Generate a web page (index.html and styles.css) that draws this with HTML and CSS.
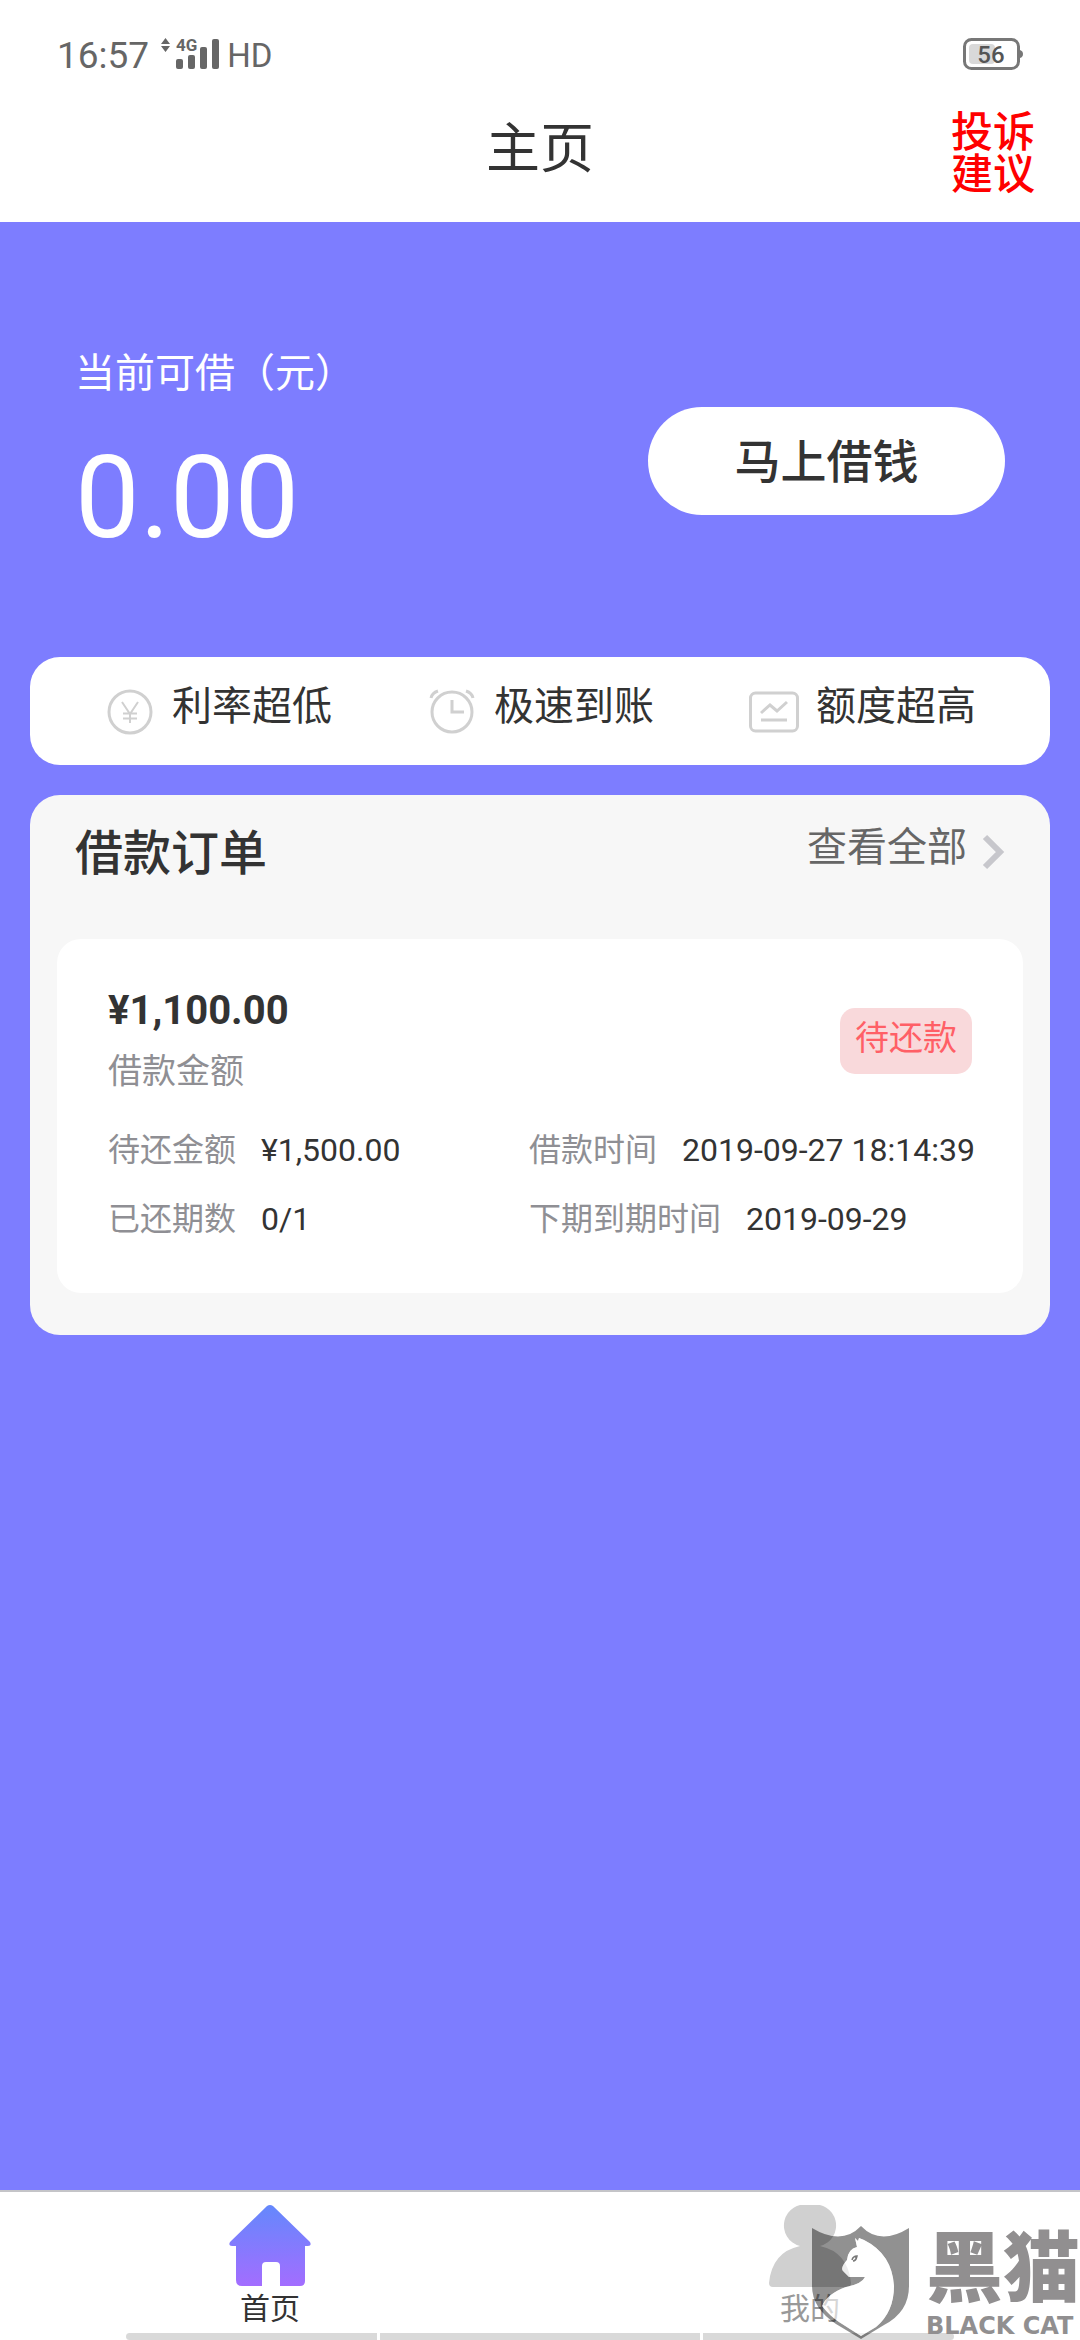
FILE: index.html
```html
<!DOCTYPE html>
<html lang="zh-CN">
  <head>
    <meta charset="UTF-8" />
    <meta name="viewport" content="width=device-width, initial-scale=1.0" />
    <title>主页</title>
    <link rel="stylesheet" href="styles.css">
  </head>
  <body>
    <div class="status-bar">
      <span class="time">16:57</span>
      <svg class="signal" width="58" height="40" viewBox="0 -4 58 40" fill="#666">
        <path d="M0 6 4.500 0 9 6zM0 8h9L4.500 14z" />
        <text x="15" y="13" class="net-type">4G</text>
        <rect x="15" y="21" width="7" height="10" rx="2" />
        <rect x="27" y="17" width="7" height="14" rx="2" />
        <rect x="39" y="9" width="7" height="22" rx="2" />
        <rect x="51" y="1" width="7" height="30" rx="2" />
      </svg>
      <span class="hd">HD</span>
      <div class="battery">
        <svg width="60" height="32" viewBox="0 0 60 32">
          <rect x="6" y="6" width="26" height="20" rx="4" fill="#d9d9d9" />
          <rect x="1.500" y="1.500" width="54" height="29" rx="7" fill="none" stroke="#777" stroke-width="3" />
          <path d="M57 12q3 1 3 4t-3 4z" fill="#777" />
          <text x="28" y="25" text-anchor="middle" class="battery-level">56</text>
        </svg>
      </div>
    </div>

    <header class="header">
      <h1>主页</h1>
      <a class="feedback" href="#feedback">投诉<br>建议</a>
    </header>

    <main>
      <section class="quota">
        <div class="quota-info">
          <p class="quota-label">当前可借（元）</p>
          <p class="quota-amount">0.00</p>
        </div>
        <button type="button" class="borrow-btn">马上借钱</button>
      </section>

      <ul class="features">
        <li>
          <svg class="feature-icon" viewBox="0 0 52 52">
            <circle cx="26" cy="26" r="21" />
            <path d="M18 16l8 12 8-12M26 28v9M19 27.500h14M19 32.500h14" stroke-width="2" />
          </svg>
          <span>利率超低</span>
        </li>
        <li>
          <svg class="feature-icon" viewBox="0 0 52 52">
            <circle cx="26" cy="26" r="20" />
            <path d="M26 14v12h12M5 12q1-5 7-7M47 12q-1-5-7-7" />
          </svg>
          <span>极速到账</span>
        </li>
        <li>
          <svg class="feature-icon" viewBox="0 0 52 52">
            <rect x="2.500" y="7" width="47" height="38" rx="5" />
            <path d="M13 27l9-8 7 6 10-9M13 34h26" />
          </svg>
          <span>额度超高</span>
        </li>
      </ul>

      <section class="orders">
        <div class="orders-head">
          <h2>借款订单</h2>
          <a href="#orders">
            <span>查看全部</span>
            <svg width="24" height="36" viewBox="0 0 24 36">
              <path d="M4 3 19 18 4 33" fill="none" stroke="#c7c7cc" stroke-width="6" />
            </svg>
          </a>
        </div>

        <article class="order-card">
          <div class="order-top">
            <div>
              <p class="order-amount">¥1,100.00</p>
              <p class="order-caption">借款金额</p>
            </div>
            <span class="order-status">待还款</span>
          </div>
          <dl class="order-detail">
            <div><dt>待还金额</dt><dd>¥1,500.00</dd></div>
            <div><dt>借款时间</dt><dd>2019-09-27 18:14:39</dd></div>
            <div><dt>已还期数</dt><dd>0/1</dd></div>
            <div><dt>下期到期时间</dt><dd>2019-09-29</dd></div>
          </dl>
        </article>
      </section>
    </main>

    <nav class="tab-bar">
      <a class="tab active" href="#home">
        <svg width="82" height="82" viewBox="0 0 82 82">
          <defs>
            <linearGradient id="homeFill" x1="0" y1="0" x2="0" y2="1">
              <stop offset="0" stop-color="#6488fc" />
              <stop offset="1" stop-color="#a36dff" />
            </linearGradient>
          </defs>
          <path fill="url(#homeFill)" d="M38 1q3-2 6 0l37 36q2 4-2 4h-3v35q0 5-5 5H51V61q0-4-4-4H37q-4 0-4 4v20H13q-6 0-6-6V41H3q-4 0-2-4z" />
        </svg>
        <span>首页</span>
      </a>
      <a class="tab" href="#mine">
        <svg width="82" height="82" viewBox="0 0 82 82" fill="#d0d0d0">
          <path d="M41 0a21 21 0 0 1 10 41q28 6 31 37 0 4-4 4H4q-4 0-4-4 3-31 31-37A21 21 0 0 1 41 0z" />
        </svg>
        <span>我的</span>
      </a>
    </nav>

    <div class="gesture-bar"><i></i><i></i><i></i></div>

    <div class="watermark">
      <svg width="98" height="116" viewBox="0 0 98 116">
        <path fill="#000" fill-opacity="0.43" fill-rule="evenodd" d="M0 4Q30 22 49 2 68 22 97 4V62Q97 88 72 101L49 115 24 100Q0 84 0 62ZM43 14l2 9Q36 25 35 36 28 44 31 47L37 53h16Q50 60 34 63 15 70 10 82 18 92 27 98L49 112 64 103Q82 88 82 62 80 30 52 16l-5-2-1 3z" />
        <path fill="#fff" fill-opacity="0.600" d="M43 14l2 9Q36 25 35 36 28 44 31 47L37 53h16Q50 60 34 63 15 70 10 82 18 92 27 98L49 112 64 103Q82 88 82 62 80 30 52 16l-5-2-1 3z" />
        <path fill="none" stroke="#777" stroke-width="1.500" d="M40 36q1-4 5-4-1 5-4 5M44 32q1 3-2 5" />
      </svg>
      <div class="watermark-text">
        <strong>黑猫</strong>
        <span>BLACK CAT</span>
      </div>
    </div>
  </body>
</html>
```
FILE: styles.css
```css
* {
  box-sizing: border-box;
  margin: 0;
  padding: 0;
}

body {
  display: flex;
  flex-direction: column;
  min-height: 100vh;
  position: relative;
  background: #7d7dff;
  color: #333;
  font-family: Roboto, "Noto Sans CJK SC", sans-serif;
  font-size: 40px;
}

a {
  color: inherit;
  text-decoration: none;
}

.status-bar {
  display: flex;
  align-items: center;
  height: 108px;
  padding: 0 57px;
  background: #fff;
  color: #666;
}

.time {
  padding-top: 2px;
  font-size: 37px;
}

.signal {
  margin: 0 8px 0 12px;
}

.net-type {
  font-size: 17px;
  font-weight: bold;
}

.hd {
  padding-top: 2px;
  font-size: 33px;
}

.battery {
  display: flex;
  margin-left: auto;
}

.battery-level {
  fill: #555;
  font-size: 24px;
  font-weight: 500;
}

.header {
  display: flex;
  align-items: center;
  justify-content: center;
  position: relative;
  height: 114px;
  padding-bottom: 42px;
  background: #fff;
}

.header h1 {
  font-size: 54px;
  font-weight: 400;
}

.feedback {
  position: absolute;
  top: 4px;
  right: 45px;
  color: #f00;
  font-size: 42px;
  font-weight: 500;
  line-height: 42px;
}

.quota {
  display: flex;
  align-items: center;
  justify-content: space-between;
  padding: 122px 75px 79px;
}

.quota-label {
  margin-bottom: 14px;
  color: #fff;
  line-height: 60px;
}

.quota-amount {
  color: #fff;
  font-size: 115px;
  line-height: 160px;
}

.borrow-btn {
  width: 357px;
  height: 108px;
  padding-bottom: 6px;
  border: none;
  border-radius: 54px;
  background: #fff;
  color: #333;
  font-family: inherit;
  font-size: 46px;
  font-weight: 500;
}

.features {
  display: flex;
  height: 108px;
  margin: 0 30px 30px;
  padding: 2px 27px 0;
  border-radius: 30px;
  background: #fff;
  list-style: none;
}

.features li {
  display: flex;
  flex: 1;
  align-items: center;
  justify-content: center;
  gap: 16px;
}

.features span {
  padding-bottom: 18px;
}

.feature-icon {
  width: 52px;
  height: 52px;
  fill: none;
  stroke: #d0d0d0;
  stroke-width: 3;
}

.orders {
  margin: 0 30px;
  padding: 0 27px 42px;
  border-radius: 30px;
  background: #f7f7f7;
}

.orders-head {
  display: flex;
  align-items: center;
  justify-content: space-between;
  height: 144px;
  padding: 0 18px 30px;
}

.orders-head h2 {
  padding-bottom: 6px;
  font-size: 48px;
  font-weight: 500;
}

.orders-head a {
  display: flex;
  align-items: center;
  gap: 14px;
  color: #666;
}

.orders-head span {
  padding-bottom: 16px;
}

.order-card {
  padding: 42px 51px 39px;
  border-radius: 24px;
  background: #fff;
}

.order-top {
  display: flex;
  align-items: center;
  justify-content: space-between;
  margin-bottom: 15px;
}

.order-amount {
  font-weight: bold;
  line-height: 60px;
}

.order-caption {
  color: #8f8f94;
  font-size: 34px;
  line-height: 60px;
}

.order-status {
  height: 66px;
  padding: 0 15px;
  border-radius: 15px;
  background: #f9d9db;
  color: #ff5f66;
  font-size: 34px;
  line-height: 60px;
}

.order-detail {
  display: grid;
  grid-template-columns: 421px 1fr;
  font-size: 32px;
  line-height: 69px;
}

.order-detail div {
  display: flex;
  gap: 25px;
  white-space: nowrap;
}

.order-detail dt {
  color: #8f8f94;
}

.tab-bar {
  display: flex;
  height: 150px;
  margin-top: auto;
  border-top: 2px solid #c4c4c8;
  background: #fff;
}

.tab {
  display: flex;
  flex: 1;
  flex-direction: column;
  align-items: center;
  padding-top: 13px;
  color: #999;
  font-size: 30px;
  line-height: 44px;
}

.tab.active {
  color: #333;
}

.gesture-bar {
  display: flex;
  gap: 3px;
  position: absolute;
  right: 126px;
  bottom: 0;
  left: 126px;
  height: 7px;
  overflow: hidden;
  border-radius: 4px;
}

.gesture-bar i {
  flex: 251;
  background: #d9d9d9;
}

.gesture-bar i:nth-child(2) {
  flex: 320;
}

.watermark {
  display: flex;
  align-items: flex-end;
  gap: 16px;
  position: absolute;
  right: 0;
  bottom: 0;
}

.watermark-text {
  display: flex;
  flex-direction: column;
  color: #918f90;
}

.watermark-text strong {
  font-size: 77px;
  font-weight: 900;
  line-height: 84px;
}

.watermark-text span {
  font-family: "DejaVu Sans", sans-serif;
  font-size: 24px;
  font-weight: bold;
  line-height: 28px;
}
```
